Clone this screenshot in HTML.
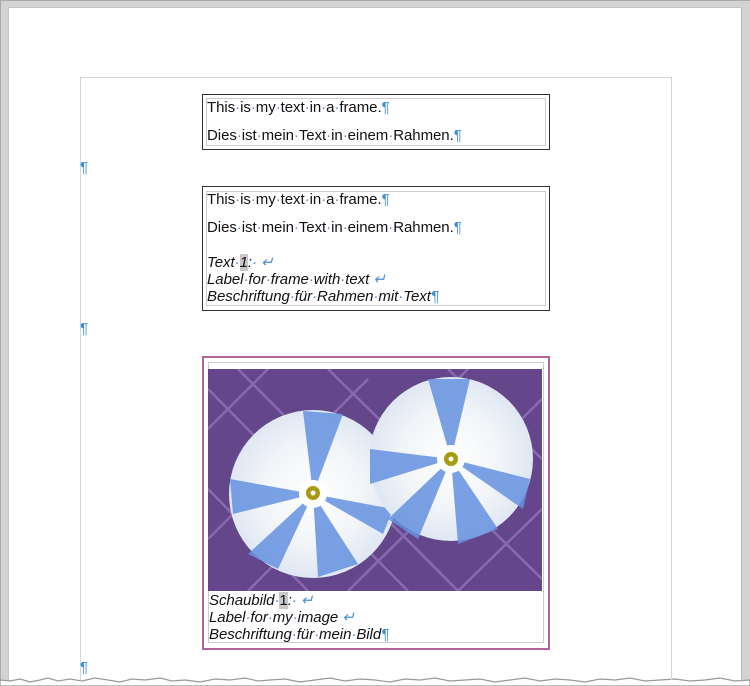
<!DOCTYPE html>
<html><head><meta charset="utf-8"><style>
*{margin:0;padding:0;box-sizing:border-box}
body{width:750px;height:686px;position:relative;background:#fff;overflow:hidden;font-family:"Liberation Sans",sans-serif;font-size:15px;color:#111}
.abs{position:absolute}
.pm{color:#3c8fd8}
.dt{color:#4a8fd8}
.t{position:absolute;white-space:nowrap;line-height:17px;letter-spacing:-0.05px}
.i{font-style:italic}
.hl{background:#c8c8c8}
</style></head><body>
<div class="abs" style="left:0;top:0;width:750px;height:681px;background:#d3d3d3;border-top:1px solid #aaa;border-left:1px solid #aaa"></div>
<div class="abs" style="left:8px;top:7px;width:734px;height:674px;background:#fff;border-top:1px solid #c4c4c4;border-left:1px solid #c4c4c4;border-right:1px solid #b8b8b8"></div>
<svg class="abs" style="left:0;top:674px" width="750" height="12"><path d="M0 6 L10 7 20 5 30 8 40 6 48 4 58 7 70 5 82 7 95 4 108 6 120 8 132 5 145 6 160 4 172 7 185 6 200 8 215 5 230 6 245 4 258 7 270 6 285 5 300 8 315 6 330 4 345 7 360 5 375 6 390 8 405 5 420 6 435 4 450 7 465 6 480 5 495 8 510 6 525 4 540 7 555 5 570 6 585 8 600 5 615 6 630 4 645 7 660 6 675 5 690 7 705 6 720 4 735 7 750 6 L750 12 0 12Z" fill="#fff" stroke="#999" stroke-width="1.2"/></svg>
<div class="abs" style="left:80px;top:77px;width:592px;height:603px;border-left:1px solid #d6d6d6;border-top:1px solid #d6d6d6;border-right:1px solid #d6d6d6"></div>
<div class="t pm" style="left:80px;top:159px">¶</div>
<div class="t pm" style="left:80px;top:320px">¶</div>
<div class="t pm" style="left:80px;top:659px">¶</div>

<div class="abs" style="left:202px;top:94px;width:348px;height:56px;border:1px solid #333"></div>
<div class="abs" style="left:206px;top:98px;width:340px;height:48px;border:1px solid #ccc"></div>
<div class="t" style="left:207px;top:99px">This<span class="dt">·</span>is<span class="dt">·</span>my<span class="dt">·</span>text<span class="dt">·</span>in<span class="dt">·</span>a<span class="dt">·</span>frame.<span class="pm">¶</span></div>
<div class="t" style="left:207px;top:127px">Dies<span class="dt">·</span>ist<span class="dt">·</span>mein<span class="dt">·</span>Text<span class="dt">·</span>in<span class="dt">·</span>einem<span class="dt">·</span>Rahmen.<span class="pm">¶</span></div>

<div class="abs" style="left:202px;top:186px;width:348px;height:125px;border:1px solid #333"></div>
<div class="abs" style="left:206px;top:191px;width:340px;height:115px;border:1px solid #ccc"></div>
<div class="t" style="left:207px;top:191px">This<span class="dt">·</span>is<span class="dt">·</span>my<span class="dt">·</span>text<span class="dt">·</span>in<span class="dt">·</span>a<span class="dt">·</span>frame.<span class="pm">¶</span></div>
<div class="t" style="left:207px;top:219px">Dies<span class="dt">·</span>ist<span class="dt">·</span>mein<span class="dt">·</span>Text<span class="dt">·</span>in<span class="dt">·</span>einem<span class="dt">·</span>Rahmen.<span class="pm">¶</span></div>
<div class="t i" style="left:207px;top:254px">Text<span class="dt">·</span><span class="hl">1</span>:<span class="dt">· ↵</span></div>
<div class="t i" style="left:207px;top:271px">Label<span class="dt">·</span>for<span class="dt">·</span>frame<span class="dt">·</span>with<span class="dt">·</span>text<span class="dt"> ↵</span></div>
<div class="t i" style="left:207px;top:288px">Beschriftung<span class="dt">·</span>für<span class="dt">·</span>Rahmen<span class="dt">·</span>mit<span class="dt">·</span>Text<span class="pm">¶</span></div>

<div class="abs" style="left:202px;top:356px;width:348px;height:294px;border:2px solid #b0639a"></div>
<div class="abs" style="left:208px;top:362px;width:336px;height:281px;border:1px solid #ccc"></div>
<svg class="abs" style="left:208px;top:369px" width="334" height="222">
<defs>
<radialGradient id="f" cx="50%" cy="50%" r="50%">
<stop offset="0" stop-color="#fff"/><stop offset=".6" stop-color="#f2f5f8"/><stop offset="1" stop-color="#dfe7f3"/></radialGradient>
</defs>
<rect width="334" height="222" fill="#64478a"/>
<g stroke="#9a78c4" stroke-width="2.5" opacity=".7" fill="none">
<path d="M0 60 L60 0 M0 170 L160 10 M40 222 L260 0 M140 222 L334 30 M250 222 L334 140"/>
<path d="M0 20 L200 222 M30 0 L250 222 M120 0 L334 210 M240 0 L334 90 M0 120 L100 222"/>
</g>
<g>
<circle cx="105" cy="125" r="84" fill="url(#f)"/>
<g fill="#6592e0" opacity=".85">
<path d="M105 125 L95 42 L135 45Z"/>
<path d="M105 125 L22 110 L25 145Z"/>
<path d="M105 125 L40 185 L70 200Z"/>
<path d="M105 125 L110 208 L150 195Z"/>
<path d="M105 125 L185 140 L175 165Z"/>
</g>
<circle cx="105" cy="125" r="14" fill="#fff"/>
<circle cx="105" cy="124" r="7" fill="#a79a10"/>
<circle cx="105" cy="124" r="2.5" fill="#fff"/>
</g>
<g>
<circle cx="243" cy="90" r="82" fill="url(#f)"/>
<g fill="#6592e0" opacity=".85">
<path d="M243 90 L220 10 L262 10Z"/>
<path d="M243 90 L162 80 L162 115Z"/>
<path d="M243 90 L180 150 L210 170Z"/>
<path d="M243 90 L250 175 L290 160Z"/>
<path d="M243 90 L322 110 L315 140Z"/>
</g>
<circle cx="243" cy="90" r="14" fill="#fff"/>
<circle cx="243" cy="90" r="7" fill="#a79a10"/>
<circle cx="243" cy="90" r="2.5" fill="#fff"/>
</g>
</svg>
<div class="t i" style="left:209px;top:592px">Schaubild<span class="dt">·</span><span class="hl" style="font-style:normal">1</span>:<span class="dt">· ↵</span></div>
<div class="t i" style="left:209px;top:609px">Label<span class="dt">·</span>for<span class="dt">·</span>my<span class="dt">·</span>image<span class="dt"> ↵</span></div>
<div class="t i" style="left:209px;top:626px">Beschriftung<span class="dt">·</span>für<span class="dt">·</span>mein<span class="dt">·</span>Bild<span class="pm">¶</span></div>
</body></html>
